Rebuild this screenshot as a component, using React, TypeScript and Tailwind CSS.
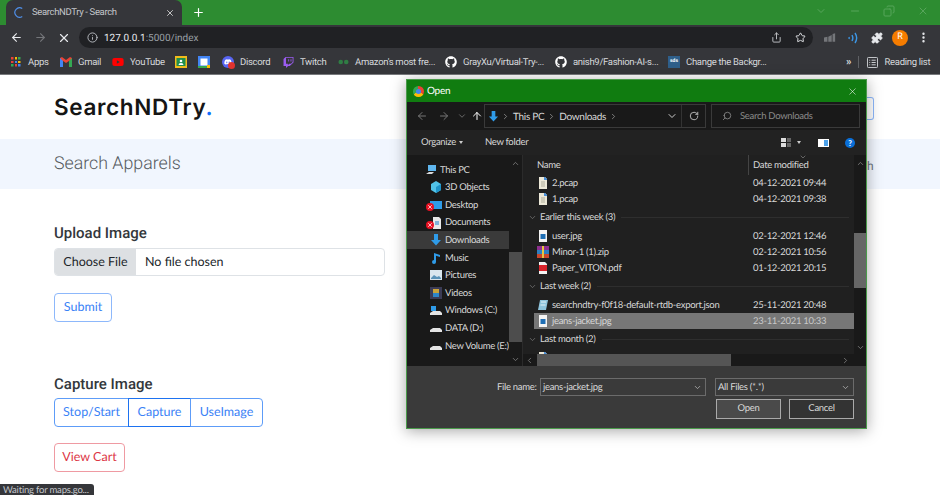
import type { ReactNode } from "react";
import {
  ArrowLeft,
  ArrowRight,
  ArrowUp,
  ChevronDown,
  ChevronLeft,
  ChevronRight,
  ChevronUp,
  Info,
  MoreVertical,
  Plus,
  RotateCw,
  Search,
  Share,
  Star,
  X,
  Minus,
  Puzzle,
  Copy,
} from "lucide-react";
import { FaDiscord, FaGithub, FaTwitch, FaYoutube } from "react-icons/fa";

const ui = "font-['Roboto',sans-serif]";
const win = "font-['Lato','Noto_Sans',sans-serif]";

function AppsIcon() {
  const colors = ["#ea4335", "#fbbc04", "#34a853", "#ea4335", "#4285f4", "#fbbc04", "#34a853", "#ea4335", "#4285f4"];
  return (
    <span className="grid h-[10px] w-[10px] grid-cols-3 gap-px">
      {colors.map((c, i) => (
        <svg key={i} viewBox="0 0 2 2" className="h-[2.5px] w-[2.5px]">
          <rect width="2" height="2" fill={c} />
        </svg>
      ))}
    </span>
  );
}

function Bookmark({ icon, label, className }: { icon: ReactNode; label?: string; className: string }) {
  return (
    <div className={`flex shrink-0 items-center gap-[6px] ${className}`}>
      <span className="flex h-3 w-3 shrink-0 items-center justify-center">{icon}</span>
      {label && <span className="translate-y-px whitespace-nowrap tracking-[-0.3px]">{label}</span>}
    </div>
  );
}

function FileGlyph({ kind }: { kind: string }) {
  if (kind === "zip")
    return (
      <svg viewBox="0 0 12 12" className="h-3 w-3 shrink-0">
        <rect width="12" height="12" fill="#8d2f8f" />
        <rect y="4" width="12" height="4" fill="#2e7fc1" />
        <rect y="8" width="12" height="4" fill="#c9472c" />
        <rect x="5" width="2" height="12" fill="#e8c440" />
      </svg>
    );
  if (kind === "pdf")
    return (
      <svg viewBox="0 0 12 12" className="h-3 w-3 shrink-0">
        <path d="M2 0h6l2 2v10H2z" fill="#f2f2f2" />
        <rect x="2" y="3" width="8" height="6" fill="#d8232a" />
      </svg>
    );
  if (kind === "json")
    return (
      <svg viewBox="0 0 12 12" className="h-3 w-3 shrink-0">
        <path d="M3 1h8L9 11H1z" fill="#8fc4dc" />
        <path d="M4 3h5M3.5 6h5" stroke="#e6f2f7" strokeWidth="1" />
      </svg>
    );
  if (kind === "jpg")
    return (
      <svg viewBox="0 0 12 12" className="h-3 w-3 shrink-0">
        <path d="M2 0h8v12H2z" fill="#f4f4f4" />
        <rect x="3.5" y="4" width="5" height="5" fill="#1f6fb5" />
      </svg>
    );
  return (
    <svg viewBox="0 0 12 12" className="h-3 w-3 shrink-0">
      <path d="M2 0h6l2 2v10H2z" fill="#ece8d8" />
      <path d="M4 5h4M4 7h4M4 9h4" stroke="#9a9684" strokeWidth="0.7" />
      <path d="M7 0h1l2 2v1H7z" fill="#4a90d9" />
    </svg>
  );
}

function NavGlyph({ kind }: { kind: string }) {
  const cls = "h-3 w-3 shrink-0";
  if (kind === "pc")
    return (
      <svg viewBox="0 0 12 12" className={cls}>
        <rect x="3" y="1" width="8" height="6" fill="#5fb6ee" />
        <path d="M1 10l3-2h5l-2 2z" fill="#d8d8d8" />
      </svg>
    );
  if (kind === "3d")
    return (
      <svg viewBox="0 0 12 12" className={cls}>
        <path d="M6 0l5 3v6l-5 3-5-3V3z" fill="#52c3e8" />
        <path d="M6 6l5-3v6l-5 3z" fill="#1f94c9" />
      </svg>
    );
  if (kind === "desktop")
    return (
      <svg viewBox="0 0 12 12" className={cls}>
        <rect x="0" y="2" width="12" height="8" fill="#2f9be8" />
      </svg>
    );
  if (kind === "docs")
    return (
      <svg viewBox="0 0 12 12" className={cls}>
        <path d="M3 0h6l2 2v10H3z" fill="#e8e8e8" />
        <rect x="5" y="4" width="4" height="4" fill="#7fb2d9" />
      </svg>
    );
  if (kind === "down")
    return (
      <svg viewBox="0 0 12 12" className={cls}>
        <path d="M4 0h4v6h3L6 11.500 1 6h3z" fill="#2f9be8" />
      </svg>
    );
  if (kind === "music")
    return (
      <svg viewBox="0 0 12 12" className={cls}>
        <path d="M4 1l6 2v2L6 3.800V10a2 2 0 1 1-2-2z" fill="#2f9be8" />
      </svg>
    );
  if (kind === "pics")
    return (
      <svg viewBox="0 0 12 12" className={cls}>
        <rect y="1" width="12" height="10" fill="#d9e6ee" />
        <path d="M1 9l3-3 3 2 2-1 2 2v1H1z" fill="#5a93b8" />
      </svg>
    );
  if (kind === "videos")
    return (
      <svg viewBox="0 0 12 12" className={cls}>
        <rect width="12" height="12" fill="#3b3b55" />
        <rect x="3" y="2" width="6" height="4" fill="#c9a23a" />
        <rect x="3" y="6" width="6" height="4" fill="#2f86c9" />
      </svg>
    );
  return (
    <svg viewBox="0 0 12 12" className={cls}>
      {kind === "win" && <rect x="1" y="1" width="5" height="5" fill="#2f9be8" />}
      <path d="M0 8l3-2h7l2 2v2H0z" fill="#e4e4e4" />
    </svg>
  );
}

const navItems = [
  { label: "This PC", kind: "pc", indent: "pl-[18px]" },
  { label: "3D Objects", kind: "3d" },
  { label: "Desktop", kind: "desktop", error: true },
  { label: "Documents", kind: "docs", error: true },
  { label: "Downloads", kind: "down", active: true },
  { label: "Music", kind: "music" },
  { label: "Pictures", kind: "pics" },
  { label: "Videos", kind: "videos" },
  { label: "Windows (C:)", kind: "win" },
  { label: "DATA (D:)", kind: "disk" },
  { label: "New Volume (E:)", kind: "disk" },
];

const fileRows = [
  { name: "2.pcap", kind: "pcap", date: "04-12-2021 09:44" },
  { name: "1.pcap", kind: "pcap", date: "04-12-2021 09:38" },
  { group: "Earlier this week (3)" },
  { name: "user.jpg", kind: "jpg", date: "02-12-2021 12:46" },
  { name: "Minor-1 (1).zip", kind: "zip", date: "02-12-2021 10:56" },
  { name: "Paper_VITON.pdf", kind: "pdf", date: "01-12-2021 20:15" },
  { group: "Last week (2)" },
  { name: "searchndtry-f0f18-default-rtdb-export.json", kind: "json", date: "25-11-2021 20:48" },
  { name: "jeans-jacket.jpg", kind: "jpg", date: "23-11-2021 10:33", selected: true },
  { group: "Last month (2)" },
  { name: "", kind: "pcap", date: "" },
];

function FileDialog() {
  return (
    <div className={`absolute left-[406px] top-[79px] flex h-[350px] w-[461px] flex-col border border-[#4a9a4a] bg-[#191919] text-[9.5px] tracking-[-0.3px] text-[#d8d8d8] shadow-[0_2px_14px_rgba(0,0,0,0.35)] ${win}`}>
      {/* Title bar */}
      <div className="flex h-[22px] shrink-0 items-center justify-between bg-[#107c10] pl-[6px] pr-[8px]">
        <div className="flex items-center gap-[3px] text-[10px] text-white">
          <span className="h-[11px] w-[11px] rounded-full bg-[conic-gradient(#ea4335_0_33%,#fbbc04_33%_66%,#34a853_66%_100%)] p-[3px]">
            <span className="block h-full w-full rounded-full bg-[#4285f4]" />
          </span>
          Open
        </div>
        <X size={11} strokeWidth={1.2} className="text-white" />
      </div>

      {/* Address row */}
      <div className="flex h-[28px] shrink-0 items-center bg-[#191919] pl-[9px] pr-[6px]">
        <ArrowLeft size={12} className="text-[#777]" />
        <ArrowRight size={12} className="ml-[10px] text-[#777]" />
        <ChevronDown size={10} className="ml-[7px] text-[#777]" />
        <ArrowUp size={12} className="ml-[4px] text-white" />
        <div className="ml-px flex h-[24px] w-[222px] items-center border border-[#3a3a3a] pl-[3px] text-[10px]">
          <svg viewBox="0 0 12 12" className="h-[11px] w-[11px]">
            <path d="M4 0h4v6h3L6 11.500 1 6h3z" fill="#2f9be8" />
          </svg>
          <ChevronRight size={9} className="ml-[2px] text-[#999]" />
          <span className="ml-[3px] translate-y-px">This PC</span>
          <ChevronRight size={9} className="ml-[3px] text-[#999]" />
          <span className="ml-[3px] translate-y-px">Downloads</span>
          <ChevronRight size={9} className="ml-[3px] text-[#999]" />
          <ChevronDown size={12} className="ml-auto mr-[3px] text-[#ccc]" />
          <div className="flex h-full w-[24px] items-center justify-center border-l border-[#333]">
            <RotateCw size={10} className="text-[#ccc]" />
          </div>
        </div>
        <div className="ml-[5px] flex h-[24px] flex-1 items-center border border-[#3a3a3a] pl-[10px] text-[#8a8a8a]">
          <Search size={10} className="-scale-x-100" />
          <span className="ml-[8px] translate-y-px">Search Downloads</span>
        </div>
      </div>

      {/* Command bar */}
      <div className="flex h-[25px] shrink-0 items-center bg-[#222222] pl-[14px] pr-[11px]">
        <span className="translate-y-px">Organize</span>
        <span className="ml-[3px] h-0 w-0 border-x-[2.5px] border-t-[3px] border-x-transparent border-t-[#ccc]" />
        <span className="ml-[22px] translate-y-px">New folder</span>
        <div className="ml-auto flex items-center">
          <span className="grid h-[9px] w-[10px] grid-cols-2 gap-px">
            <span className="bg-[#ddd]" />
            <span className="bg-[#666]" />
            <span className="bg-[#ddd]" />
            <span className="bg-[#666]" />
          </span>
          <span className="ml-[6px] h-0 w-0 border-x-[2.5px] border-t-[3px] border-x-transparent border-t-[#ccc]" />
          <span className="ml-[17px] flex h-[8px] w-[11px] border border-white bg-white">
            <span className="w-1/2 bg-white" />
            <span className="w-1/2 bg-[#4ba0e8]" />
          </span>
          <span className="ml-[16px] flex h-[10px] w-[10px] items-center justify-center rounded-full bg-[#0a6fd8] text-[8px] font-bold text-white">?</span>
        </div>
      </div>

      {/* Nav tree and file list */}
      <div className="flex min-h-0 flex-1">
        <div className="relative flex w-[102px] shrink-0 flex-col overflow-hidden bg-[#191919] pt-[6px]">
          {navItems.map((n) => (
            <div
              key={n.label}
              className={`relative flex h-[17.6px] shrink-0 items-center gap-[3px] whitespace-nowrap ${n.indent ?? "pl-[23px]"} ${n.active ? "bg-[#3a3a3a]" : ""}`}
            >
              <NavGlyph kind={n.kind} />
              <span className="translate-y-px">{n.label}</span>
              {n.error && (
                <span className="absolute left-[19px] top-[7px] flex h-[8px] w-[8px] items-center justify-center rounded-full bg-[#e81123]">
                  <X size={6} strokeWidth={3} className="text-white" />
                </span>
              )}
            </div>
          ))}
        </div>
        <div className="flex w-[13px] shrink-0 flex-col items-center bg-[#191919] pt-[4px] text-[#888]">
          <ChevronUp size={9} />
          <div className="mt-[84px] h-[90px] w-full bg-[#4d4d4d]" />
          <ChevronDown size={9} className="mt-auto mb-[2px]" />
        </div>

        <div className="flex min-w-0 flex-1 flex-col border-l border-[#2b2b2b] bg-[#202020]">
          <div className="flex min-h-0 flex-1">
            <div className="flex min-w-0 flex-1 flex-col overflow-hidden">
              <div className="flex h-5 shrink-0 items-center">
                <span className="w-[225px] translate-y-px pl-[14px]">Name</span>
                <span className="relative flex h-full items-center border-l border-[#444] pl-[4px]">
                  <span className="translate-y-px">Date modified</span>
                  <ChevronDown size={8} className="absolute right-[1px] top-[-2px] text-[#888]" />
                </span>
              </div>
              {fileRows.map((r, i) =>
                r.group ? (
                  <div key={i} className="mb-px flex h-5 shrink-0 items-center pl-[5px]">
                    <ChevronDown size={9} className="text-[#777]" />
                    <span className="ml-[3px] translate-y-px whitespace-nowrap">{r.group}</span>
                    <span className="ml-[6px] mr-[5px] h-px flex-1 bg-[#2e2e2e]" />
                  </div>
                ) : (
                  <div
                    key={i}
                    className={`ml-[11px] flex h-4 shrink-0 items-center ${r.selected ? "bg-[#777777]" : ""}`}
                  >
                    <span className="ml-[3px] flex w-[212px] items-center gap-[3px] whitespace-nowrap">
                      <FileGlyph kind={r.kind ?? ""} />
                      <span className="translate-y-px">{r.name}</span>
                    </span>
                    <span className={`translate-y-px whitespace-nowrap pl-[4px] ${r.selected ? "text-[#c8c8c8]" : ""}`}>{r.date}</span>
                  </div>
                ),
              )}
            </div>
            <div className="flex w-[12px] shrink-0 flex-col items-center bg-[#191919] pt-[4px] text-[#888]">
              <ChevronUp size={9} />
              <div className="mt-[65px] h-[55px] w-full bg-[#666666]" />
              <ChevronDown size={9} className="mt-auto mb-[2px]" />
            </div>
          </div>
          <div className="flex h-3 shrink-0 items-center bg-[#191919] text-[#888]">
            <ChevronLeft size={9} className="ml-[2px]" />
            <div className="ml-[3px] h-full w-[194px] bg-[#555555]" />
            <ChevronRight size={9} className="ml-auto mr-[16px]" />
          </div>
        </div>
      </div>

      {/* Footer */}
      <div className="relative flex h-[62px] shrink-0 flex-col bg-[#3a3a3a] pl-[90px] pr-[12px] pt-[12px]">
        <div className="flex h-[18px] items-center">
          <span className="w-[43px] translate-y-px whitespace-nowrap">File name:</span>
          <div className="flex h-full w-[166px] items-center justify-between border border-[#6b6b6b] pl-[2px] pr-[3px]">
            <span className="translate-y-px">jeans-jacket.jpg</span>
            <ChevronDown size={9} className="text-[#bbb]" />
          </div>
          <div className="ml-[9px] flex h-full flex-1 items-center justify-between border border-[#6b6b6b] pl-[2px] pr-[3px]">
            <span className="translate-y-px">All Files (*.*)</span>
            <ChevronDown size={9} className="text-[#bbb]" />
          </div>
        </div>
        <div className="mt-[3px] flex justify-end gap-[8px]">
          <div className="flex h-[20px] w-[65px] items-center justify-center border border-[#aaa] bg-[#4a4a4a]">Open</div>
          <div className="flex h-[20px] w-[65px] items-center justify-center border border-[#aaa] bg-[#333333]">Cancel</div>
        </div>
        <span className="absolute bottom-[1px] right-[1px] h-[5px] w-[5px] bg-[radial-gradient(#bbb_35%,transparent_40%)] bg-[length:2px_2px]" />
      </div>
    </div>
  );
}

function OutlineButton({ children, className }: { children: ReactNode; className: string }) {
  return (
    <div className={`flex h-[29px] items-center justify-center font-['Lato',sans-serif] text-[12.5px] ${className}`}>{children}</div>
  );
}

export default function App() {
  return (
    <div className={`relative h-[495px] w-[940px] overflow-hidden bg-white [text-rendering:geometricPrecision] ${ui}`}>
      {/* Tab strip */}
      <div className="flex h-[25px] items-end bg-[#2d8c31] pl-[6px]">
        <div className="flex h-[25px] w-[176px] items-center rounded-t-[7px] bg-[#35363a] pl-[8px] pr-[7px] text-[9.5px] text-[#c4c6ca]">
          <svg viewBox="0 0 14 14" className="h-[11px] w-[11px] shrink-0">
            <path d="M10.500 2A6 6 0 1 0 10.500 12" fill="none" stroke="#4f8fe8" strokeWidth="1.500" />
          </svg>
          <span className="ml-[7px] translate-y-px whitespace-nowrap tracking-[-0.35px]">SearchNDTry - Search</span>
          <X size={10} strokeWidth={2} className="ml-auto text-[#dddddd]" />
        </div>
        <Plus size={13} strokeWidth={2.2} className="mb-[6px] ml-[10px] text-white" />
        <div className="ml-auto flex h-full items-start gap-[22px] pr-[11px] pt-[5px] text-[#57a55b]">
          <ChevronDown size={12} />
          <Minus size={12} />
          <Copy size={12} className="-scale-x-100" />
          <X size={12} />
        </div>
      </div>

      {/* Toolbar */}
      <div className="flex h-[25px] items-center bg-[#35363a] pl-[10px] pr-[10px]">
        <ArrowLeft size={13} strokeWidth={2} className="text-[#e8eaed]" />
        <ArrowRight size={13} strokeWidth={2} className="ml-[11px] text-[#74767a]" />
        <X size={14} strokeWidth={2} className="ml-[10px] text-[#e8eaed]" />
        <div className="ml-[8px] flex h-[21px] w-[734px] shrink-0 items-center rounded-full bg-[#202124] pl-[8px] pr-[7px] text-[10px]">
          <Info size={11} className="text-[#bdc1c6]" />
          <span className="ml-[6px] translate-y-px text-[#e8eaed]">127.0.0.1</span>
          <span className="translate-y-px text-[#9aa0a6]">:5000/index</span>
          <Share size={11} className="ml-auto text-[#c5c7ca]" />
          <Star size={11} className="ml-[13px] text-[#e8eaed]" />
        </div>
        <svg viewBox="0 0 14 10" className="ml-[11px] h-[9px] w-[12px] shrink-0">
          <path d="M0 5l4-1v6H0zM5 4l4-2v8H5zM10 1l3-1v10h-3z" fill="#74767a" />
        </svg>
        <svg viewBox="0 0 12 12" className="ml-[12px] h-[12px] w-[12px] shrink-0" fill="none" stroke="#3c97e6" strokeWidth="1.400">
          <path d="M1 5a3 3 0 0 1 0 2M4 3a6 6 0 0 1 0 6M7 1a9 9 0 0 1 0 10" />
        </svg>
        <Puzzle size={12} fill="#e8eaed" className="ml-[11px] shrink-0 text-[#e8eaed]" />
        <div className="ml-[9px] flex h-4 w-4 shrink-0 items-center justify-center rounded-full bg-[#f57c00] text-[9px] text-white">R</div>
        <MoreVertical size={13} strokeWidth={2.4} className="ml-[9px] shrink-0 text-[#e8eaed]" />
      </div>

      {/* Bookmarks */}
      <div className="flex h-[25px] items-center border-b border-[#77797c] bg-[#35363a] pl-[10px] text-[9.5px] text-[#d7d9dc]">
        <Bookmark className="w-[50px]" icon={<AppsIcon />} label="Apps" />
        <Bookmark
          className="w-[52px]"
          label="Gmail"
          icon={
            <svg viewBox="0 0 12 10" className="h-[10px] w-[12px]">
              <path d="M0 1l2-1 4 3 4-3 2 1v9H9V4L6 6 3 4v6H0z" fill="#ea4335" />
              <path d="M9 4l3-3v9H9z" fill="#34a853" />
              <path d="M0 1l3 3v6H0z" fill="#4285f4" />
            </svg>
          }
        />
        <Bookmark className="w-[63px]" label="YouTube" icon={<FaYoutube size={12} className="text-[#ff0000]" />} />
        <Bookmark
          className="w-[23px]"
          icon={
            <svg viewBox="0 0 12 12" className="h-3 w-3">
              <rect width="12" height="12" fill="#f2bc1b" />
              <rect x="1.500" y="2" width="9" height="8" fill="#1f8f4e" />
              <circle cx="6" cy="5" r="1.300" fill="#fff" />
              <path d="M3.500 9a2.500 2 0 0 1 5 0z" fill="#fff" />
            </svg>
          }
        />
        <Bookmark
          className="w-[24px]"
          icon={
            <svg viewBox="0 0 12 12" className="h-3 w-3">
              <rect width="12" height="12" fill="#4285f4" />
              <rect x="2.500" y="2.500" width="7" height="7" fill="#fff" />
              <rect y="10" width="9" height="2" fill="#34a853" />
              <rect x="9" y="9" width="3" height="3" fill="#fbbc04" />
            </svg>
          }
        />
        <Bookmark
          className="w-[60px]"
          label="Discord"
          icon={
            <span className="relative flex h-3 w-3 items-center justify-center rounded-full bg-[#5865f2]">
              <FaDiscord size={8} className="text-white" />
              <span className="absolute -bottom-px -right-px h-[7px] w-[7px] rounded-full bg-[#e0342f]" />
            </span>
          }
        />
        <Bookmark className="w-[55px]" label="Twitch" icon={<FaTwitch size={11} className="text-[#9b5cf0]" />} />
        <Bookmark
          className="w-[108px]"
          label="Amazon's most fre..."
          icon={
            <svg viewBox="0 0 12 6" className="h-[6px] w-[11px]">
              <circle cx="3" cy="3" r="2.500" fill="#2f7d44" />
              <circle cx="9" cy="3" r="2.500" fill="#2f7d44" />
            </svg>
          }
        />
        <Bookmark className="w-[110px]" label="GrayXu/Virtual-Try-..." icon={<FaGithub size={12} className="text-white" />} />
        <Bookmark className="w-[113px]" label="anish9/Fashion-AI-s..." icon={<FaGithub size={12} className="text-white" />} />
        <Bookmark
          className="w-[178px]"
          label="Change the Backgr..."
          icon={
            <span className="flex h-3 w-3 items-center justify-center bg-[#2f5f8a] text-[5px] font-bold text-white">sds</span>
          }
        />
        <span className="text-[11px] font-bold">»</span>
        <span className="ml-[6px] h-[12px] w-px bg-[#5f6165]" />
        <Bookmark
          className="ml-[8px] w-[66px]"
          label="Reading list"
          icon={
            <svg viewBox="0 0 12 12" className="h-[11px] w-[11px]" fill="none" stroke="#d7d9dc">
              <rect x="0.500" y="0.500" width="11" height="11" rx="1" />
              <path d="M2.500 3.500h1M5 3.500h4.500M2.500 6h1M5 6h4.500M2.500 8.500h1M5 8.500h4.500" />
            </svg>
          }
        />
      </div>

      {/* Page header */}
      <div className="flex h-[64px] items-center pl-[54px] pt-[2px]">
        <span className="font-['Inter',sans-serif] text-[22.5px] font-semibold tracking-[0.65px] text-[#151515]">
          SearchNDTry<span className="text-[#0d6efd]">.</span>
        </span>
      </div>
      <div className="flex h-[50px] items-center bg-[#f1f6fe] pl-[54px] text-[17.8px] font-light text-[#555a60]">
        Search Apparels
      </div>

      {/* Page forms */}
      <div className="flex flex-col items-start pl-[54px] text-[#212529]">
        <h2 className="mt-[35px] h-[24px] text-[15px] font-medium leading-[19px] text-[#33373b]">Upload Image</h2>
        <div className="flex h-[28px] w-[331px] items-center overflow-hidden rounded-[4px] border border-[#dee2e6] font-['Lato',sans-serif] text-[12.5px]">
          <span className="flex h-full w-[81px] items-center justify-center bg-[#dde0e3]">Choose File</span>
          <span className="ml-[9px]">No file chosen</span>
        </div>
        <OutlineButton className="mt-[17px] w-[58px] rounded-[4px] border border-[#8db8fb] text-[#3b82f6]">Submit</OutlineButton>

        <h2 className="mt-[53px] h-[23px] text-[15px] font-medium leading-[19px] text-[#33373b]">Capture Image</h2>
        <div className="flex">
          <OutlineButton className="w-[75px] rounded-l-[4px] border border-[#5d9cf8] text-[#3b82f6]">Stop/Start</OutlineButton>
          <OutlineButton className="-ml-px w-[63px] border border-[#1d72f0] text-[#3b82f6]">Capture</OutlineButton>
          <OutlineButton className="-ml-px w-[73px] rounded-r-[4px] border border-[#5d9cf8] text-[#3b82f6]">UseImage</OutlineButton>
        </div>
        <OutlineButton className="mt-[16px] w-[71px] rounded-[4px] border border-[#ef9aa2] text-[#dc3545]">View Cart</OutlineButton>
      </div>

      {/* Page bits peeking out from behind the dialog */}
      <div className="absolute left-[866px] top-[97px] h-[23px] w-[8px] rounded-r-[3px] border border-l-0 border-[#8db8fb]" />
      <span className="absolute left-[867px] top-[157px] text-[12px] text-[#6c757d]">h</span>

      <FileDialog />

      {/* Status bubble */}
      <div className="absolute bottom-0 left-0 h-[11px] w-[94px] overflow-hidden whitespace-nowrap rounded-tr-[3px] bg-[#35363a] pl-[3px] font-['Lato',sans-serif] text-[9.5px] leading-[13px] tracking-[-0.2px] text-[#c4c6ca]">
        Waiting for maps.go...
      </div>
    </div>
  );
}
